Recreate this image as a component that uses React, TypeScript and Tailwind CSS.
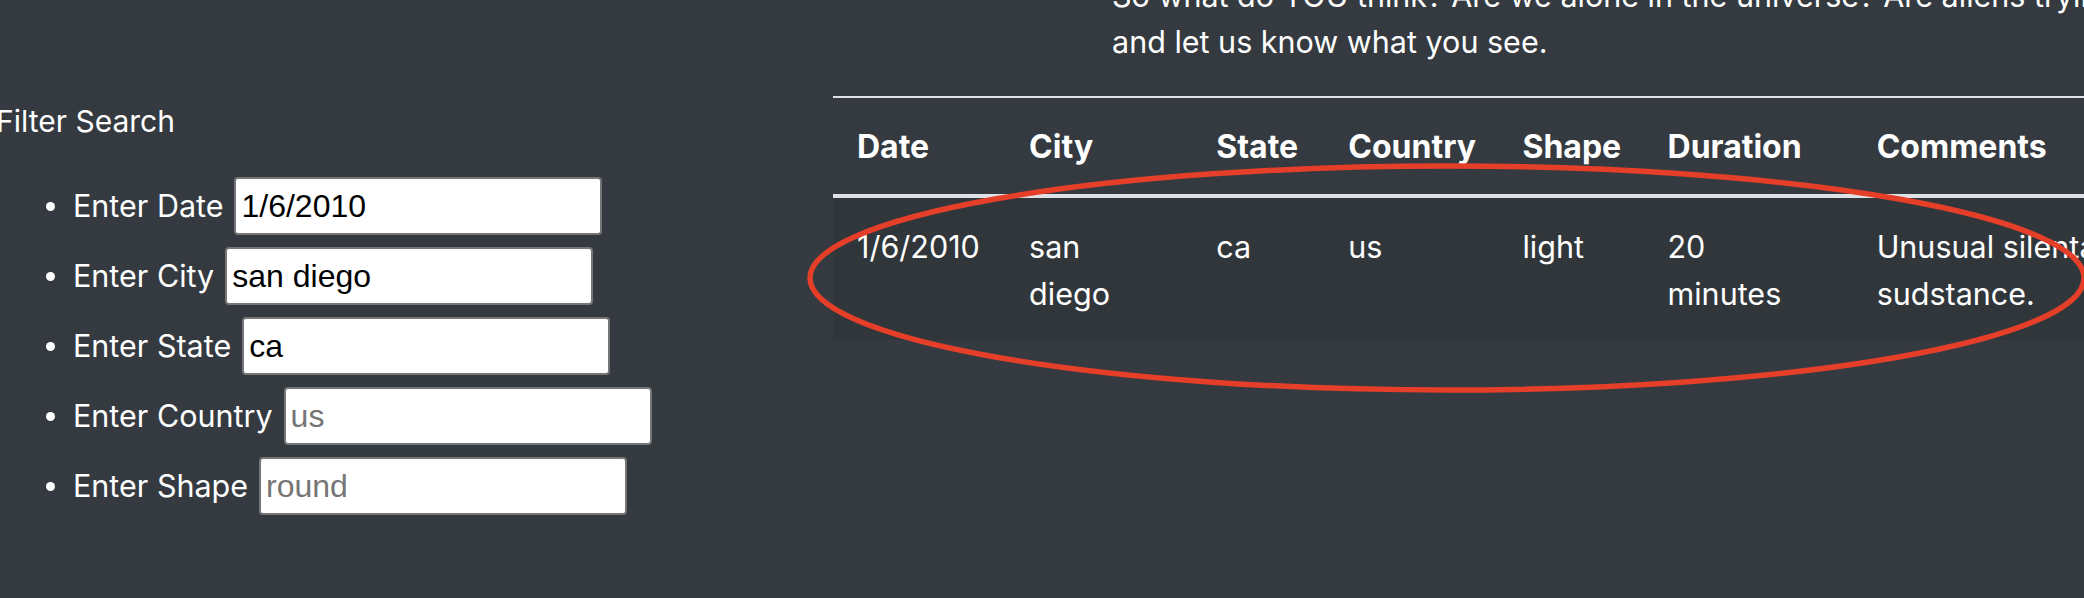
const filters = [
  { label: 'Enter Date', value: '1/6/2010', placeholder: '' },
  { label: 'Enter City', value: 'san diego', placeholder: '' },
  { label: 'Enter State', value: 'ca', placeholder: '' },
  { label: 'Enter Country', value: '', placeholder: 'us' },
  { label: 'Enter Shape', value: '', placeholder: 'round' },
];

const columns = [
  { name: 'Date', width: 'w-[172px]' },
  { name: 'City', width: 'w-[187px]' },
  { name: 'State', width: 'w-[132px]' },
  { name: 'Country', width: 'w-[174px]' },
  { name: 'Shape', width: 'w-[145px]' },
  { name: 'Duration', width: 'w-[209px]' },
  { name: 'Comments', width: 'w-[420px]' },
];

function FilterItem({ label, value, placeholder }: { label: string; value: string; placeholder: string }) {
  return (
    <li className="flex h-[58px] items-center pl-[46px]">
      <span className="h-[9px] w-[9px] shrink-0 rounded-full bg-white" />
      <label className="ml-[18px] whitespace-nowrap text-[30.5px]">{label}</label>
      <input
        type="text"
        defaultValue={value}
        placeholder={placeholder}
        className="ml-[11px] h-[58px] w-[368px] shrink-0 rounded-[4px] border-2 border-[#767676] bg-white px-[5px] font-['Liberation_Sans',Arial,sans-serif] text-[32px] text-black placeholder:text-[#757575] outline-none"
      />
    </li>
  );
}

export default function App() {
  return (
    <div className="relative h-[598px] w-full overflow-hidden bg-[#343a40] font-['Inter','Noto_Sans',sans-serif] text-[30px] leading-[46px] text-white">
      <div className="flex">
        <div className="w-[833px] shrink-0 pt-[98px]">
          <h4 className="-ml-[4px] text-[30px]">Filter Search</h4>
          <ul className="mt-[33px] flex flex-col gap-[12px]">
            {filters.map((f) => (
              <FilterItem key={f.label} {...f} />
            ))}
          </ul>
        </div>

        <div className="min-w-0 flex-1">
          <p className="-mt-[27px] mb-[31px] whitespace-nowrap pl-[279px] text-[30.5px]">
            So what do YOU think? Are we alone in the universe? Are aliens trying to communicate with us? Check out the data below
            <br />
            and let us know what you see.
          </p>
          <table className="w-[1440px] table-fixed border-collapse border-t-2 border-[#dee2e6] text-left">
            <thead>
              <tr className="border-b-4 border-[#dee2e6]">
                {columns.map((c) => (
                  <th key={c.name} className={`${c.width} px-[24px] pt-[25px] pb-[24px] text-[32px] font-bold leading-[47px]`}>
                    {c.name}
                  </th>
                ))}
              </tr>
            </thead>
            <tbody>
              <tr className="bg-[#31363b] align-top text-[30.5px] leading-[47px]">
                <td className="px-[24px] pt-[25px] pb-[23px]">1/6/2010</td>
                <td className="px-[24px] pt-[25px] pb-[23px]">
                  san
                  <br />
                  diego
                </td>
                <td className="px-[24px] pt-[25px] pb-[23px]">ca</td>
                <td className="px-[24px] pt-[25px] pb-[23px]">us</td>
                <td className="px-[24px] pt-[25px] pb-[23px]">light</td>
                <td className="px-[24px] pt-[25px] pb-[23px]">
                  20
                  <br />
                  minutes
                </td>
                <td className="whitespace-nowrap px-[24px] pt-[25px] pb-[23px]">
                  Unusual silentand bright light
                  <br />
                  sudstance.
                </td>
              </tr>
            </tbody>
          </table>
        </div>
      </div>

      <svg className="pointer-events-none absolute left-0 top-0" width="2084" height="598" viewBox="0 0 2084 598">
        <ellipse cx="1447" cy="278" rx="637" ry="112" fill="none" stroke="#e63f29" strokeWidth="5.5" />
      </svg>
    </div>
  );
}
